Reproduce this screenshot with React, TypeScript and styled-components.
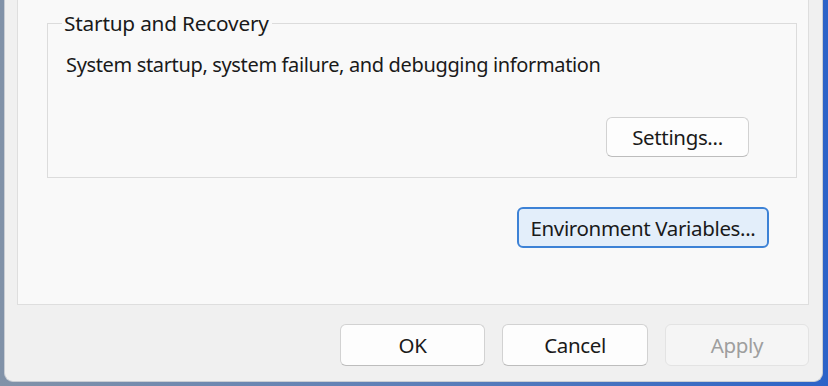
import React from "react";
import styled, { createGlobalStyle } from "styled-components";

const Global = createGlobalStyle`
  html, body { margin: 0; padding: 0; }
  body {
    width: 828px;
    height: 386px;
    overflow: hidden;
    background: linear-gradient(to right, #8192a8 0%, #5d7fb8 50%, #2c63c8 100%);
    font-family: "Noto Sans", "Open Sans", sans-serif;
  }
`;

const Desktop = styled.div`
  width: 828px;
  height: 386px;
  padding: 0 5px 0 4px;
  box-sizing: border-box;
`;

const Dialog = styled.div`
  height: 382px;
  background: #f0f0f0;
  border: 1px solid #c9cdd3;
  border-top: none;
  border-radius: 0 0 9px 9px;
  box-sizing: border-box;
  display: flex;
  flex-direction: column;
  padding: 0 13px 0 12px;
`;

const TabPanel = styled.div`
  flex: 1;
  background: #f9f9f9;
  border: 1px solid #dedede;
  border-top: none;
  padding: 11px 11px 0 29px;
  display: flex;
  flex-direction: column;
`;

const GroupBox = styled.fieldset`
  margin: 0;
  border: 1px solid #dcdcdc;
  padding: 0;
`;

const Legend = styled.legend`
  margin-left: 14px;
  padding: 0 3px 0 2px;
  font-size: 20.8px;
  color: #1a1a1a;
  line-height: 24px;
  letter-spacing: -0.2px;
`;

const GroupBody = styled.div`
  display: flex;
  flex-direction: column;
  padding: 0 47px 20px 18px;
`;

const Description = styled.div`
  font-size: 20px;
  letter-spacing: -0.35px;
  color: #1a1a1a;
  line-height: 28px;
  margin-top: 16px;
`;

const RightRow = styled.div<{ $mt: number; $mr?: number }>`
  display: flex;
  justify-content: flex-end;
  margin-top: ${(p) => p.$mt}px;
  margin-right: ${(p) => p.$mr ?? 0}px;
`;

const Button = styled.button<{ $w: number; $h?: number; $default?: boolean }>`
  width: ${(p) => p.$w}px;
  height: ${(p) => p.$h ?? 41}px;
  box-sizing: border-box;
  font-family: "Noto Sans", "Open Sans", sans-serif;
  font-size: 20.5px;
  letter-spacing: -0.35px;
  color: #1a1a1a;
  padding: 0;
  border-radius: 6px;
  background: ${(p) => (p.$default ? "#e3eefa" : "#fdfdfd")};
  border: ${(p) => (p.$default ? "2px solid #3d82d6" : "1px solid #d2d2d2")};
  border-bottom-color: ${(p) => (p.$default ? "#3d82d6" : "#bdbdbd")};
  &:disabled {
    background: #f5f5f5;
    border-color: #e3e3e3;
    color: #9e9e9e;
  }
`;

const Footer = styled.div`
  height: 76px;
  display: flex;
  justify-content: flex-end;
  align-items: flex-start;
  padding: 19px 0 0 0;
  box-sizing: border-box;
  gap: 17px;
`;

export default function App() {
  return (
    <>
      <Global />
      <Desktop>
        <Dialog>
          <TabPanel>
            <GroupBox>
              <Legend>Startup and Recovery</Legend>
              <GroupBody>
                <Description>
                  System startup, system failure, and debugging information
                </Description>
                <RightRow $mt={38}>
                  <Button $w={143} $h={40}>Settings...</Button>
                </RightRow>
              </GroupBody>
            </GroupBox>
            <RightRow $mt={29} $mr={28}>
              <Button $w={252} $h={41} $default>
                Environment Variables...
              </Button>
            </RightRow>
          </TabPanel>
          <Footer>
            <Button $w={145} $h={42}>OK</Button>
            <Button $w={146} $h={42}>Cancel</Button>
            <Button $w={144} $h={42} disabled>
              Apply
            </Button>
          </Footer>
        </Dialog>
      </Desktop>
    </>
  );
}
